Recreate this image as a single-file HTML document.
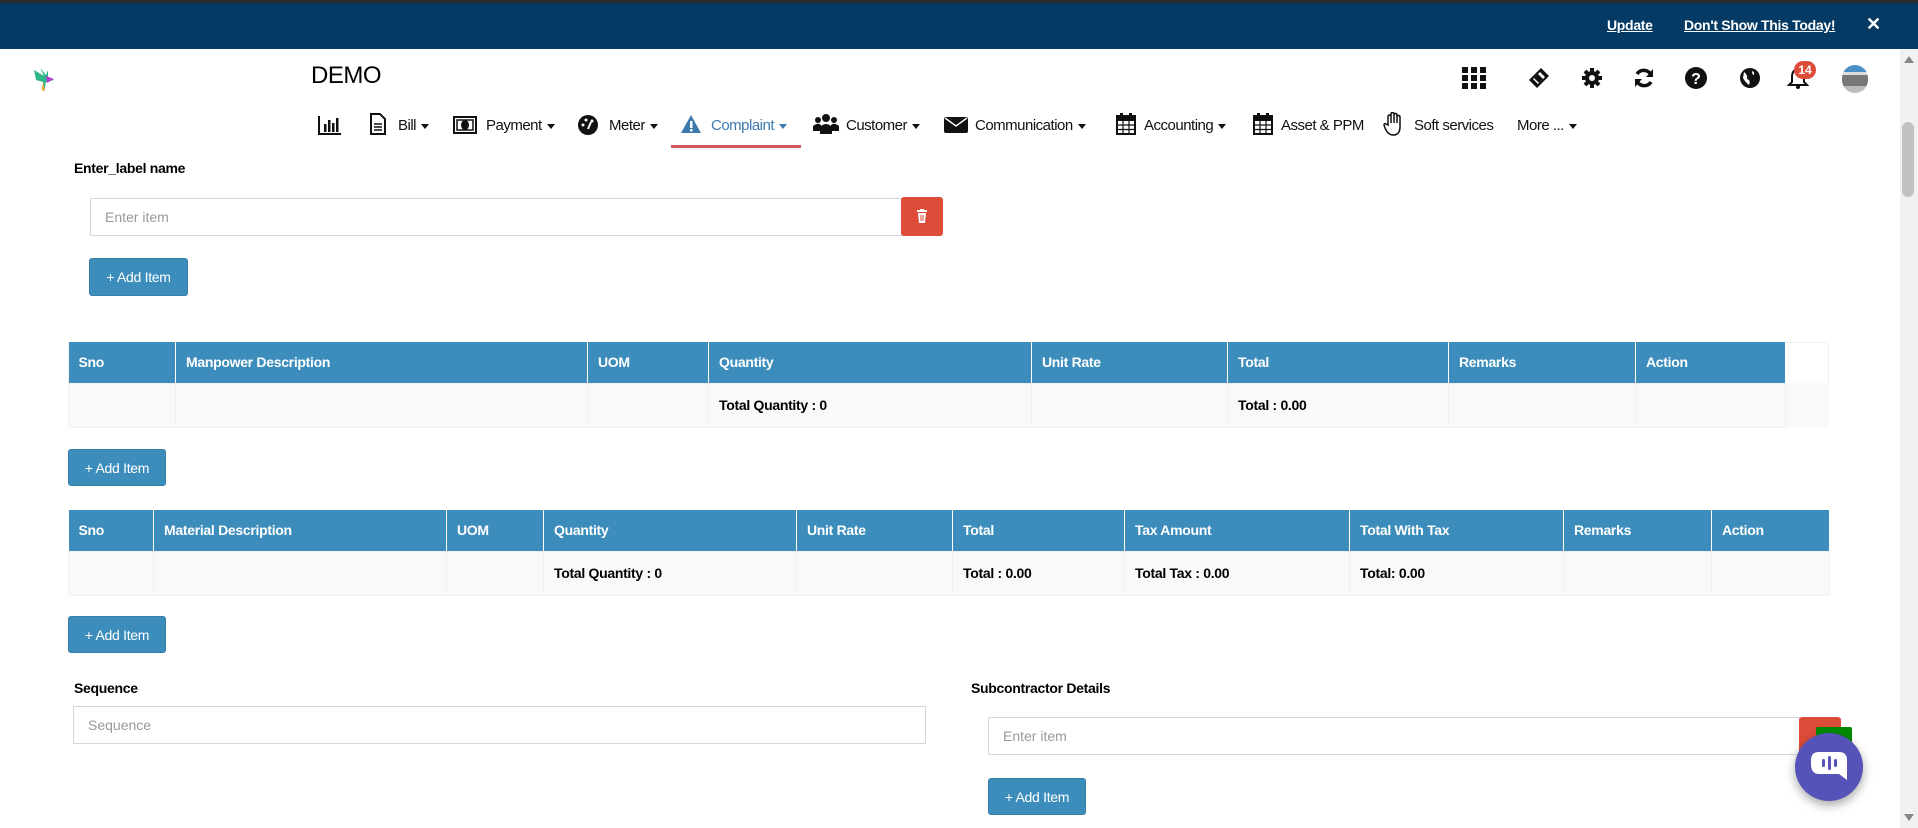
<!DOCTYPE html>
<html><head><meta charset="utf-8"><style>
*{box-sizing:border-box;margin:0;padding:0}
body{width:1918px;height:828px;overflow:hidden;background:#fff;font-family:"Liberation Sans",sans-serif;font-size:14px;color:#000;position:relative}
.a{position:absolute}
.banner{left:0;top:0;width:1918px;height:49px;background:#043a63;border-top:3px solid #2b2b2b}
.banner a{color:#fff;font-weight:bold;text-decoration:underline;font-size:14px;position:absolute;top:14px;letter-spacing:-0.3px}
.n{position:absolute;top:114px;font-size:15px;color:#111;white-space:nowrap;letter-spacing:-0.5px;line-height:24px}
.ni{position:absolute;top:113px}
.car{display:inline-block;border-left:4px solid transparent;border-right:4px solid transparent;border-top:5px solid #111;margin-left:5px;vertical-align:middle}
.lbl{font-weight:bold;font-size:14px;letter-spacing:-0.3px}
.inp{border:1px solid #d2d6de;background:#fff;color:#999;font-size:14px;padding-left:14px;display:flex;align-items:center}
.btn{background:#3c8dbc;border:1px solid #367fa9;border-radius:3px;color:#fff;font-size:14px;display:flex;align-items:center;justify-content:center;letter-spacing:-0.3px}
.red{background:#dd4b39;border-radius:3px}
table{border-collapse:collapse;position:absolute;table-layout:fixed}
th{background:#3c8dbc;color:#fff;text-align:left;font-size:14px;padding-left:10px;border-right:1px solid #fff;height:41px;letter-spacing:-0.3px}
td{background:#f9f9f9;border:1px solid #f0f0f0;font-weight:bold;font-size:14px;padding-left:10px;height:44px;letter-spacing:-0.3px}
.ic{position:absolute;top:66px;width:24px;height:24px}
</style></head><body>
<div class="a banner">
<a style="left:1607px">Update</a>
<a style="left:1684px">Don't Show This Today!</a>
<span class="a" style="left:1866px;top:11px;color:#fff;font-weight:bold;font-size:18px">✕</span>
</div>
<svg class="a" style="left:32px;top:66px" width="24" height="28" viewBox="0 0 24 28"><path d="M2 4 L12 10 L8 2 L14 9 L16 4 L16 12 L22 14 L14 16 L12 26 L11 16 L4 14Z" fill="#2fb58a"/><path d="M14 10 L22 13 L15 17Z" fill="#b03fd0"/><path d="M11 16 L13 25 L10 24Z" fill="#f0a020"/></svg>
<div class="a" style="left:311px;top:62px;font-size:24px;letter-spacing:-0.5px">DEMO</div>

<svg class="ni" style="left:318px;top:115px" width="24" height="20" viewBox="0 0 24 20"><path d="M1 1V19H23" stroke="#111" stroke-width="2" fill="none"/><rect x="6" y="9" width="2.5" height="8" fill="#111"/><rect x="10" y="5" width="2.5" height="12" fill="#111"/><rect x="14" y="8" width="2.5" height="9" fill="#111"/><rect x="18" y="3" width="2.5" height="14" fill="#111"/></svg>
<svg class="ni" style="left:370px" width="16" height="22" viewBox="0 0 16 22"><path d="M1 1H10L15 6V21H1Z" fill="none" stroke="#111" stroke-width="2"/><path d="M4 11H12M4 14H12M4 17H12" stroke="#111" stroke-width="1.5"/></svg>
<span class="n" style="left:398px">Bill<span class="car"></span></span>
<svg class="ni" style="left:453px;top:116px" width="24" height="18" viewBox="0 0 24 18"><rect x="1" y="1" width="22" height="16" fill="none" stroke="#111" stroke-width="2"/><ellipse cx="12" cy="9" rx="4" ry="5" fill="#111"/><rect x="4" y="4" width="16" height="10" fill="none" stroke="#111" stroke-width="1.5"/></svg>
<span class="n" style="left:486px">Payment<span class="car"></span></span>
<svg class="ni" style="left:577px;top:114px" width="22" height="22" viewBox="0 0 22 22"><circle cx="11" cy="11" r="10" fill="#111"/><circle cx="6" cy="11" r="1.5" fill="#fff"/><circle cx="9" cy="6" r="1.5" fill="#fff"/><circle cx="15" cy="7" r="1.5" fill="#fff"/><path d="M11 15L14 8" stroke="#fff" stroke-width="2"/></svg>
<span class="n" style="left:609px">Meter<span class="car"></span></span>
<svg class="ni" style="left:680px;top:114px" width="22" height="20" viewBox="0 0 22 20"><path d="M11 1L21 19H1Z" fill="#3c7ab0"/><rect x="10" y="7" width="2.5" height="7" fill="#fff"/><rect x="10" y="15" width="2.5" height="2.5" fill="#fff"/></svg>
<span class="n" style="left:711px;color:#3c7ab0">Complaint<span class="car" style="border-top-color:#3c7ab0"></span></span>
<svg class="ni" style="left:813px" width="26" height="22" viewBox="0 0 26 22"><circle cx="13" cy="5" r="4" fill="#111"/><circle cx="5" cy="7" r="3" fill="#111"/><circle cx="21" cy="7" r="3" fill="#111"/><path d="M7 21V14Q13 8 19 14V21Z" fill="#111"/><path d="M0 18V13Q5 9 8 12V18Z M26 18V13Q21 9 18 12V18Z" fill="#111"/></svg>
<span class="n" style="left:846px">Customer<span class="car"></span></span>
<svg class="ni" style="left:944px;top:116px" width="24" height="18" viewBox="0 0 24 18"><rect x="0" y="1" width="24" height="16" rx="2" fill="#111"/><path d="M1 2L12 10L23 2" stroke="#fff" stroke-width="1.5" fill="none"/></svg>
<span class="n" style="left:975px">Communication<span class="car"></span></span>
<svg class="ni" style="left:1116px" width="20" height="22" viewBox="0 0 20 22"><rect x="1" y="3" width="18" height="18" fill="none" stroke="#111" stroke-width="2"/><rect x="1" y="3" width="18" height="5" fill="#111"/><path d="M7 8V21M13 8V21M1 12H19M1 16.5H19" stroke="#111" stroke-width="1.2"/><rect x="4" y="0" width="3" height="5" fill="#111"/><rect x="13" y="0" width="3" height="5" fill="#111"/></svg>
<span class="n" style="left:1144px">Accounting<span class="car"></span></span>
<svg class="ni" style="left:1253px" width="20" height="22" viewBox="0 0 20 22"><rect x="1" y="3" width="18" height="18" fill="none" stroke="#111" stroke-width="2"/><rect x="1" y="3" width="18" height="5" fill="#111"/><path d="M7 8V21M13 8V21M1 12H19M1 16.5H19" stroke="#111" stroke-width="1.2"/><rect x="4" y="0" width="3" height="5" fill="#111"/><rect x="13" y="0" width="3" height="5" fill="#111"/></svg>
<span class="n" style="left:1281px">Asset &amp; PPM</span>
<svg class="ni" style="left:1383px;top:112px" width="20" height="24" viewBox="0 0 20 24"><path d="M5 13V5Q5 3 6.5 3Q8 3 8 5V11V2Q8 0.5 9.5 0.5Q11 0.5 11 2V11V3Q11 1.5 12.5 1.5Q14 1.5 14 3V11V5Q14 3.5 15.5 3.5Q17 3.5 17 5V15Q17 23 10 23Q5 23 2 16L1 13Q1 11 3 12Z" fill="none" stroke="#111" stroke-width="1.5"/></svg>
<span class="n" style="left:1414px">Soft services</span>
<span class="n" style="left:1517px">More ...<span class="car"></span></span>

<div class="a" style="left:671px;top:145px;width:130px;height:3px;background:#d0595a"></div>
<svg class="ic" style="left:1462px" viewBox="0 0 24 24"><g fill="#111"><rect x="0" y="1" width="6" height="6"/><rect x="9" y="1" width="6" height="6"/><rect x="18" y="1" width="6" height="6"/><rect x="0" y="9" width="6" height="6"/><rect x="9" y="9" width="6" height="6"/><rect x="18" y="9" width="6" height="6"/><rect x="0" y="17" width="6" height="6"/><rect x="9" y="17" width="6" height="6"/><rect x="18" y="17" width="6" height="6"/></g></svg>
<svg class="ic" style="left:1527px" viewBox="0 0 24 24"><path d="M14 2L22 10L10 22L2 14Z" fill="#111"/><path d="M13 6L18 11L11 18L6 13Z" fill="#fff"/><path d="M11 8L16 13L12 17L7 12Z" fill="#111"/></svg>
<svg class="ic" style="left:1580px" viewBox="0 0 24 24"><circle cx="12" cy="12" r="7" fill="#111"/><g stroke="#111" stroke-width="4"><path d="M12 2V22M2 12H22M5 5L19 19M19 5L5 19"/></g><circle cx="12" cy="12" r="3" fill="#fff"/></svg>
<svg class="ic" style="left:1632px" viewBox="0 0 24 24"><path d="M19 9A8 8 0 0 0 5 8" stroke="#111" stroke-width="3.5" fill="none"/><path d="M5 15A8 8 0 0 0 19 16" stroke="#111" stroke-width="3.5" fill="none"/><path d="M21 3V11H14Z M3 21V13H10Z" fill="#111"/></svg>
<svg class="ic" style="left:1684px" viewBox="0 0 24 24"><circle cx="12" cy="12" r="11" fill="#111"/><text x="12" y="18" text-anchor="middle" fill="#fff" font-family="Liberation Sans" font-weight="bold" font-size="16">?</text></svg>
<svg class="ic" style="left:1738px" viewBox="0 0 24 24"><circle cx="12" cy="12" r="10" fill="#111"/><path d="M6 6Q10 9 9 13Q13 14 11 19Q7 16 5 12Z M14 5Q17 6 16 9Q14 9 14 5Z" fill="#fff"/></svg>
<svg class="ic" style="left:1786px" viewBox="0 0 24 24"><path d="M12 3Q18 4 18 11V16L21 19H3L6 16V11Q6 4 12 3Z" fill="none" stroke="#111" stroke-width="2"/><circle cx="12" cy="21" r="2" fill="#111"/></svg>
<div class="a" style="left:1794px;top:61px;width:22px;height:18px;border-radius:9px;background:#dd4b39;color:#fff;font-size:12px;font-weight:bold;text-align:center;line-height:18px">14</div>
<div class="a" style="left:1842px;top:65px;width:26px;height:28px;border-radius:13px;background:linear-gradient(#4a90c8 0 25%,#ddd 25% 35%,#777 35% 75%,#bbb 75%)"></div>
<div class="a" style="left:1900px;top:49px;width:18px;height:779px;background:#f1f1f1"></div>
<div class="a" style="left:1902px;top:122px;width:12px;height:75px;background:#c1c1c1;border-radius:6px"></div>
<div class="a" style="left:1904px;top:56px;border-left:5px solid transparent;border-right:5px solid transparent;border-bottom:7px solid #888"></div>
<div class="a" style="left:1904px;top:814px;border-left:5px solid transparent;border-right:5px solid transparent;border-top:7px solid #888"></div>

<div class="a lbl" style="left:74px;top:160px">Enter_label name</div>
<div class="a inp" style="left:90px;top:198px;width:812px;height:38px">Enter item</div>
<div class="a red" style="left:901px;top:197px;width:42px;height:39px"><svg style="position:absolute;left:16px;top:12px" width="10" height="14" viewBox="0 0 10 14"><rect x="0" y="1" width="10" height="2" fill="#fff"/><rect x="3" y="0" width="4" height="2" fill="#fff"/><path d="M1 4H9L8 14H2Z" fill="#fff"/><path d="M4 6V12M6 6V12" stroke="#dd4b39"/></svg></div>
<div class="a btn" style="left:89px;top:258px;width:99px;height:38px">+ Add Item</div>

<div class="a" style="left:68px;top:342px;width:1761px;height:85px;border:1px solid #f0f0f0"></div>
<table style="left:68px;top:342px;width:1717px">
<colgroup><col style="width:107px"><col style="width:412px"><col style="width:121px"><col style="width:323px"><col style="width:196px"><col style="width:221px"><col style="width:187px"><col style="width:150px"></colgroup>
<tr><th>Sno</th><th>Manpower Description</th><th>UOM</th><th>Quantity</th><th>Unit Rate</th><th>Total</th><th>Remarks</th><th>Action</th></tr>
<tr><td></td><td></td><td></td><td>Total Quantity : 0</td><td></td><td>Total : 0.00</td><td></td><td></td></tr>
</table>
<div class="a" style="left:1785px;top:383px;width:44px;height:44px;background:#f9f9f9;border-left:1px solid #f0f0f0"></div>
<div class="a btn" style="left:68px;top:449px;width:98px;height:37px">+ Add Item</div>

<table style="left:68px;top:510px;width:1761px">
<colgroup><col style="width:85px"><col style="width:293px"><col style="width:97px"><col style="width:253px"><col style="width:156px"><col style="width:172px"><col style="width:225px"><col style="width:214px"><col style="width:148px"><col style="width:118px"></colgroup>
<tr><th>Sno</th><th>Material Description</th><th>UOM</th><th>Quantity</th><th>Unit Rate</th><th>Total</th><th>Tax Amount</th><th>Total With Tax</th><th>Remarks</th><th>Action</th></tr>
<tr><td></td><td></td><td></td><td>Total Quantity : 0</td><td></td><td>Total : 0.00</td><td>Total Tax : 0.00</td><td>Total: 0.00</td><td></td><td></td></tr>
</table>
<div class="a btn" style="left:68px;top:616px;width:98px;height:37px">+ Add Item</div>

<div class="a lbl" style="left:74px;top:680px">Sequence</div>
<div class="a inp" style="left:73px;top:706px;width:853px;height:38px">Sequence</div>
<div class="a lbl" style="left:971px;top:680px">Subcontractor Details</div>
<div class="a inp" style="left:988px;top:717px;width:812px;height:38px">Enter item</div>
<div class="a red" style="left:1799px;top:717px;width:42px;height:38px"></div>
<div class="a" style="left:1816px;top:727px;width:36px;height:30px;background:#008a00;border-radius:2px"></div>
<div class="a btn" style="left:988px;top:778px;width:98px;height:37px">+ Add Item</div>

<div class="a" style="left:1795px;top:733px;width:68px;height:68px;border-radius:50%;background:#5653b8;box-shadow:0 4px 10px rgba(0,0,0,.35)"></div>
<svg class="a" style="left:1809px;top:750px" width="40" height="36" viewBox="0 0 40 36"><path d="M10 2H30Q38 2 38 10V30L30 24H10Q2 24 2 14V10Q2 2 10 2Z" fill="#fff"/><rect x="13" y="9" width="3" height="8" rx="1.5" fill="#5653b8"/><rect x="19" y="6" width="3" height="14" rx="1.5" fill="#5653b8"/><rect x="25" y="9" width="3" height="8" rx="1.5" fill="#5653b8"/></svg>
</body></html>
